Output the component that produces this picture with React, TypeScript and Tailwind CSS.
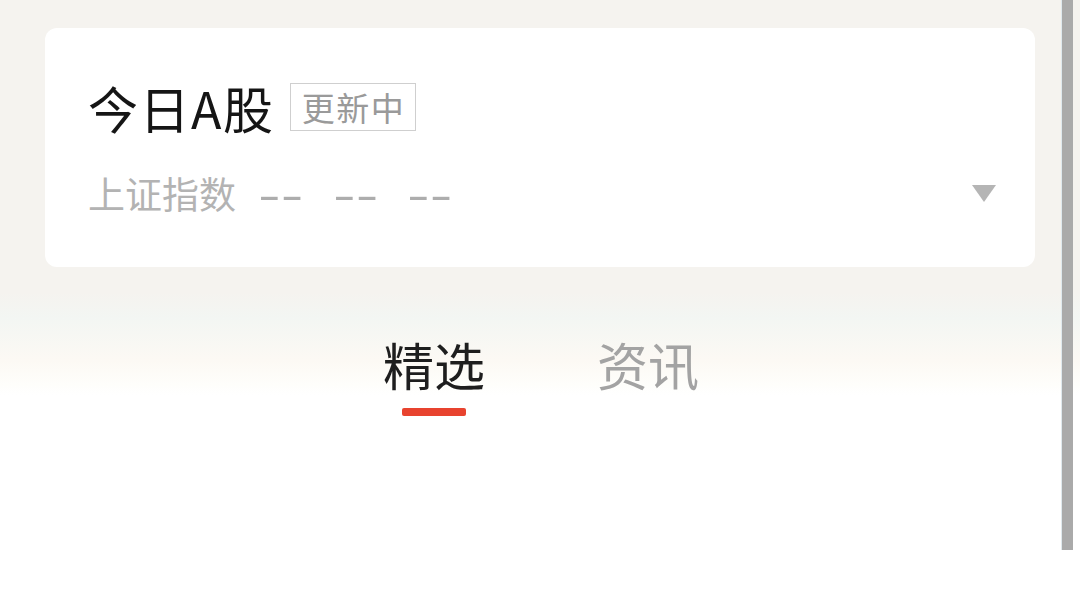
import React from "react";

function Dashes({ last }: { last?: boolean }) {
  return (
    <span
      className={
        "inline-block origin-left scale-x-[1.7] translate-y-[2px] text-[40px] leading-none text-[#adadad] " +
        (last ? "" : "mr-[48px]")
      }
      style={{ fontFamily: '"Liberation Sans", Arial, sans-serif' }}
    >
      --
    </span>
  );
}

export default function App() {
  const cjk = { fontFamily: '"Noto Sans CJK SC", "Noto Sans", sans-serif' };
  return (
    <div
      className="relative w-[1080px] h-[607px] overflow-hidden bg-[linear-gradient(to_bottom,#f5f3ef_0px,#f5f3ef_292px,#f3f6f3_318px,#fcf9f4_360px,#fefefb_385px,#ffffff_395px)]"
      style={cjk}
    >
      <div className="pt-[28px] px-[45px]">
        <div className="h-[239px] rounded-[12px] bg-white pl-[43px] pr-[38px] pt-[80px] flex flex-col">
          <div className="flex items-center h-[48px] -mt-[25px]">
            <span className="text-[50px] leading-none text-[#151515] tracking-[1.5px]">今日A股</span>
            <span className="ml-[16px] h-[48px] w-[126px] border border-[#cfcfcf] flex items-center justify-center text-[33px] leading-none text-[#9a9a9a] tracking-[1.5px]">
              更新中
            </span>
          </div>
          <div className="mt-[42px] flex items-center h-[40px]">
            <span className="text-[37px] leading-none text-[#b3b3b3]">上证指数</span>
            <div className="ml-[22px] flex items-center">
              <Dashes />
              <Dashes />
              <Dashes last />
            </div>
            <div className="ml-auto">
              <svg width="26" height="19" viewBox="0 0 26 19">
                <polygon points="1,1 25,1 13,18" fill="#b5b5b5" />
              </svg>
            </div>
          </div>
        </div>
      </div>

      <div className="mt-[72px] flex justify-center gap-[112px] pl-[2px]">
        <div className="flex flex-col items-center">
          <span className="text-[51px] leading-none text-[#1e1e1e]">精选</span>
          <span className="mt-[18px] block w-[64px] h-[8px] rounded-[2px] bg-[#e8432f]" />
        </div>
        <div className="flex flex-col items-center">
          <span className="text-[51px] leading-none text-[#a3a3a3]">资讯</span>
          <span className="mt-[18px] block w-[64px] h-[8px]" />
        </div>
      </div>

      <div className="absolute top-0 left-[1061px] w-[12px] h-[550px] border-l border-[#dfe9ee] bg-[#aaaaaa]" />
    </div>
  );
}
